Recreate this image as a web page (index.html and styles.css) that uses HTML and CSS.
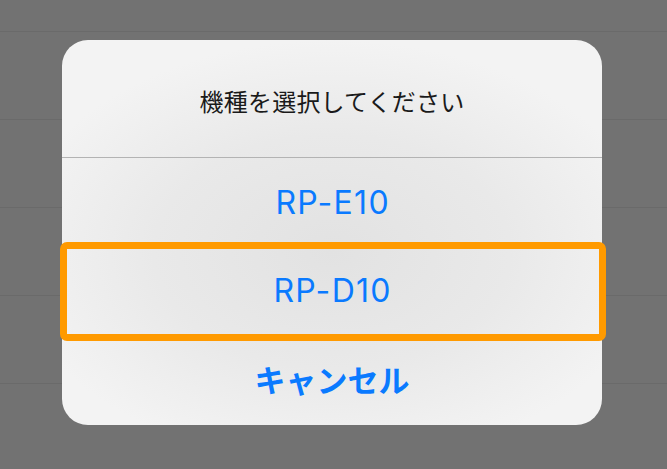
FILE: index.html
```html
<!DOCTYPE html>
<html lang="ja">
<head>
<meta charset="utf-8">
<link rel="stylesheet" href="styles.css">
</head>
<body>
<div class="screen">
  <div class="table">
    <div class="trow first"></div>
    <div class="trow"></div>
    <div class="trow"></div>
    <div class="trow"></div>
    <div class="trow"></div>
    <div class="trow last"></div>
  </div>
  <div class="alert">
    <div class="alert-head">
      <div class="alert-title">機種を選択してください</div>
    </div>
    <div class="alert-btn"><span class="label">RP-E10</span></div>
    <div class="alert-btn"><span class="label">RP-D10</span></div>
    <div class="alert-btn cancel">キャンセル</div>
    <div class="highlight"></div>
  </div>
</div>
</body>
</html>
```
FILE: styles.css
```css
html, body {
  margin: 0;
  padding: 0;
}
body {
  width: 667px;
  height: 469px;
  overflow: hidden;
  background: #727272;
  font-family: "Inter", "Noto Sans CJK JP", sans-serif;
}
.screen {
  position: relative;
  width: 667px;
  height: 469px;
}
.table {
  display: flex;
  flex-direction: column;
}
.trow {
  height: 87px;
  border-bottom: 1px solid #6a6a6a;
}
.trow.first {
  height: 31px;
}
.trow.last {
  border-bottom: none;
}
.alert {
  position: absolute;
  left: 62px;
  top: 40px;
  width: 540px;
  height: 385px;
  border-radius: 26px;
  background: radial-gradient(ellipse 60% 55% at 50% 55%, #e2e2e2 0%, #e9e9e9 55%, #f3f3f3 100%);
  display: flex;
  flex-direction: column;
}
.alert-head {
  height: 118px;
  box-sizing: border-box;
  padding-top: 46px;
  border-bottom: 1px solid #b3b3b3;
  text-align: center;
}
.alert-title {
  font-family: "Noto Sans CJK JP", sans-serif;
  font-size: 24px;
  line-height: 30px;
  font-weight: 400;
  color: #1a1a1a;
  letter-spacing: 0.2px;
}
.alert-btn {
  height: 88px;
  display: flex;
  align-items: center;
  justify-content: center;
  color: #0a7aff;
  font-size: 32px;
  font-weight: 400;
}
.alert-btn .label {
  letter-spacing: 1.3px;
  margin-right: -1.3px;
}
.alert-btn.cancel {
  flex: 1;
  font-family: "Noto Sans CJK JP", sans-serif;
  font-weight: 700;
  font-size: 31px;
  padding-bottom: 2px;
}
.highlight {
  position: absolute;
  left: -2px;
  top: 202px;
  width: 546px;
  height: 99px;
  box-sizing: border-box;
  border: 7px solid #ff9a00;
  border-radius: 7px;
}
```
